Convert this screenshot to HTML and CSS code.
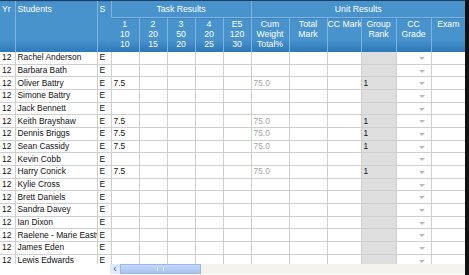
FILE: index.html
```html
<!DOCTYPE html>
<html lang="en">
<head>
  <meta charset="UTF-8">
  <title>Unit Results</title>
  <link rel="stylesheet" href="styles.css">
</head>
<body>
  <div class="sheet">
    <div class="grid-view">
      <table class="grid">
        <colgroup>
          <col style="width:15px"><col style="width:82px"><col style="width:14px">
          <col style="width:28px"><col style="width:28px"><col style="width:28px"><col style="width:28px"><col style="width:28px">
          <col style="width:38px"><col style="width:38px"><col style="width:34px"><col style="width:35px"><col style="width:35px"><col style="width:34px">
        </colgroup>
        <thead>
          <tr class="head-top">
            <th rowspan="2" class="left">Yr</th>
            <th rowspan="2" class="left">Students</th>
            <th rowspan="2" class="left">S</th>
            <th colspan="5">Task Results</th>
            <th colspan="6">Unit Results</th>
          </tr>
          <tr class="head-sub">
            <th>1<br>10<br>10</th>
            <th>2<br>20<br>15</th>
            <th>3<br>50<br>20</th>
            <th>4<br>20<br>25</th>
            <th>E5<br>120<br>30</th>
            <th>Cum<br>Weight<br>Total%</th>
            <th>Total<br>Mark</th>
            <th>CC Mark</th>
            <th>Group<br>Rank</th>
            <th>CC<br>Grade</th>
            <th>Exam</th>
          </tr>
        </thead>
        <tbody>
          <tr><td>12</td><td>Rachel Anderson</td><td>E</td><td></td><td></td><td></td><td></td><td></td><td class="cum"></td><td></td><td></td><td class="rank"></td><td class="grade"><i></i></td><td></td></tr>
          <tr><td>12</td><td>Barbara Bath</td><td>E</td><td></td><td></td><td></td><td></td><td></td><td class="cum"></td><td></td><td></td><td class="rank"></td><td class="grade"><i></i></td><td></td></tr>
          <tr><td>12</td><td>Oliver Battry</td><td>E</td><td>7.5</td><td></td><td></td><td></td><td></td><td class="cum">75.0</td><td></td><td></td><td class="rank">1</td><td class="grade"><i></i></td><td></td></tr>
          <tr><td>12</td><td>Simone Battry</td><td>E</td><td></td><td></td><td></td><td></td><td></td><td class="cum"></td><td></td><td></td><td class="rank"></td><td class="grade"><i></i></td><td></td></tr>
          <tr><td>12</td><td>Jack Bennett</td><td>E</td><td></td><td></td><td></td><td></td><td></td><td class="cum"></td><td></td><td></td><td class="rank"></td><td class="grade"><i></i></td><td></td></tr>
          <tr><td>12</td><td>Keith Brayshaw</td><td>E</td><td>7.5</td><td></td><td></td><td></td><td></td><td class="cum">75.0</td><td></td><td></td><td class="rank">1</td><td class="grade"><i></i></td><td></td></tr>
          <tr><td>12</td><td>Dennis Briggs</td><td>E</td><td>7.5</td><td></td><td></td><td></td><td></td><td class="cum">75.0</td><td></td><td></td><td class="rank">1</td><td class="grade"><i></i></td><td></td></tr>
          <tr><td>12</td><td>Sean Cassidy</td><td>E</td><td>7.5</td><td></td><td></td><td></td><td></td><td class="cum">75.0</td><td></td><td></td><td class="rank">1</td><td class="grade"><i></i></td><td></td></tr>
          <tr><td>12</td><td>Kevin Cobb</td><td>E</td><td></td><td></td><td></td><td></td><td></td><td class="cum"></td><td></td><td></td><td class="rank"></td><td class="grade"><i></i></td><td></td></tr>
          <tr><td>12</td><td>Harry Conick</td><td>E</td><td>7.5</td><td></td><td></td><td></td><td></td><td class="cum">75.0</td><td></td><td></td><td class="rank">1</td><td class="grade"><i></i></td><td></td></tr>
          <tr><td>12</td><td>Kylie Cross</td><td>E</td><td></td><td></td><td></td><td></td><td></td><td class="cum"></td><td></td><td></td><td class="rank"></td><td class="grade"><i></i></td><td></td></tr>
          <tr><td>12</td><td>Brett Daniels</td><td>E</td><td></td><td></td><td></td><td></td><td></td><td class="cum"></td><td></td><td></td><td class="rank"></td><td class="grade"><i></i></td><td></td></tr>
          <tr><td>12</td><td>Sandra Davey</td><td>E</td><td></td><td></td><td></td><td></td><td></td><td class="cum"></td><td></td><td></td><td class="rank"></td><td class="grade"><i></i></td><td></td></tr>
          <tr><td>12</td><td>Ian Dixon</td><td>E</td><td></td><td></td><td></td><td></td><td></td><td class="cum"></td><td></td><td></td><td class="rank"></td><td class="grade"><i></i></td><td></td></tr>
          <tr><td>12</td><td>Raelene - Marie Eastwood</td><td>E</td><td></td><td></td><td></td><td></td><td></td><td class="cum"></td><td></td><td></td><td class="rank"></td><td class="grade"><i></i></td><td></td></tr>
          <tr><td>12</td><td>James Eden</td><td>E</td><td></td><td></td><td></td><td></td><td></td><td class="cum"></td><td></td><td></td><td class="rank"></td><td class="grade"><i></i></td><td></td></tr>
          <tr><td>12</td><td>Lewis Edwards</td><td>E</td><td></td><td></td><td></td><td></td><td></td><td class="cum"></td><td></td><td></td><td class="rank"></td><td class="grade"><i></i></td><td></td></tr>
        </tbody>
      </table>
    </div>
    <div class="hscroll">
      <div class="frozen"></div>
      <div class="arrow">&lsaquo;</div>
      <div class="thumb"><span></span></div>
      <div class="track"></div>
    </div>
  </div>
</body>
</html>
```

FILE: styles.css
```css
body {
  margin: 0;
  background: #fff;
  font-family: 'Liberation Sans', Arial, sans-serif;
}
.sheet {
  width: 465px;
  height: 275px;
  border-right: 4px solid #111;
  overflow: hidden;
}
.grid-view {
  height: 264px;
  overflow: hidden;
}
.grid {
  border-collapse: collapse;
  table-layout: fixed;
  width: 465px;
}
.grid th {
  color: #fff;
  font-weight: normal;
  font-size: 8.7px;
  line-height: 10px;
  vertical-align: top;
  text-align: center;
  padding: 0;
  border-left: 1px solid #7fb2dc;
  overflow: hidden;
  white-space: nowrap;
}
.grid th:first-child {
  border-left: none;
}
.grid th.left {
  text-align: left;
  padding: 3px 0 0 2px;
  background: linear-gradient(#4993cd 0, #4993cd 38px, #2c78b9 51px);
}
.head-top {
  height: 17px;
}
.head-top th {
  border-top: 1px solid #1d3f60;
  background: #4993cd;
}
.head-top th:not(.left) {
  padding-top: 3px;
  border-bottom: 1px solid #7fb2dc;
}
.head-sub {
  height: 34px;
}
.head-sub th {
  padding-top: 1px;
  background: linear-gradient(#4993cd 0, #4993cd 21px, #2c78b9 33px);
}
.grid tbody tr {
  height: 12.67px;
}
.grid td {
  padding: 0 0 0 2px;
  font-size: 8.4px;
  line-height: 9px;
  color: #111;
  border-right: 1px solid #cfcfcf;
  border-bottom: 1px solid #cfcfcf;
  white-space: nowrap;
  overflow: hidden;
  vertical-align: middle;
}
.grid td.cum {
  color: #aaa49c;
}
.grid td.rank {
  background: #dedede;
}
.grid td.grade {
  position: relative;
}
.grid td.grade i {
  position: absolute;
  right: 6px;
  top: 5px;
  border-left: 3px solid transparent;
  border-right: 3px solid transparent;
  border-top: 3px solid #b9b9b9;
}
.hscroll {
  display: flex;
  height: 10px;
}
.frozen {
  width: 110px;
  background: #fff;
}
.arrow {
  width: 10px;
  background: #dde8fb;
  color: #3d5fa0;
  font-size: 10px;
  line-height: 9px;
  text-align: center;
}
.thumb {
  width: 81px;
  background: linear-gradient(#c5d8f8, #a9c3f0);
  border: 1px solid #9bb6e8;
  box-sizing: border-box;
  display: flex;
  align-items: center;
  justify-content: center;
}
.thumb span {
  width: 5px;
  height: 4px;
  border-left: 1px solid #e8f0fe;
  border-right: 1px solid #e8f0fe;
}
.track {
  flex: 1;
  background: #f4f3ee;
}
```
